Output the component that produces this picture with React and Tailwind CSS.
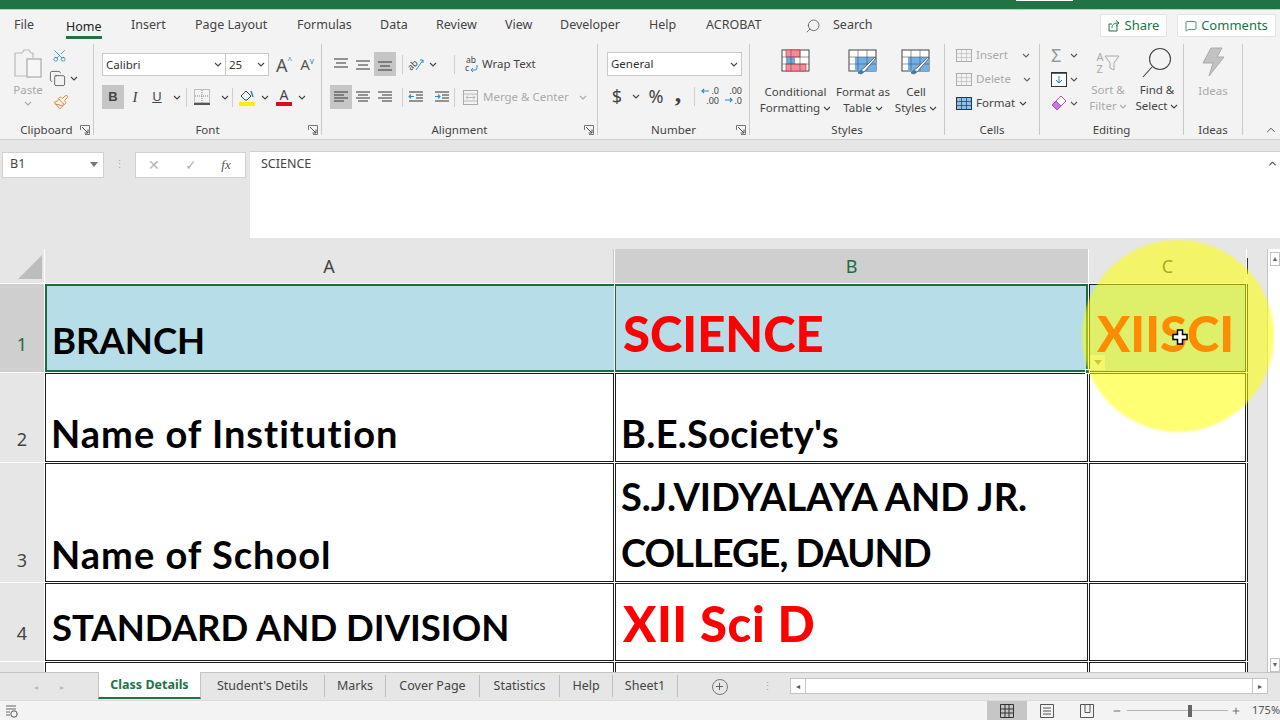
import { Search, MessageSquare, Scissors, Copy, Paintbrush, ChevronUp, Plus, Minus } from 'lucide-react'

function Caret({ className = '' }) {
  return (
    <svg width="8" height="5" viewBox="0 0 8 5" className={`shrink-0 ${className}`}>
      <path d="M1 1l3 3 3-3" fill="none" stroke="currentColor" strokeWidth="1.1" />
    </svg>
  )
}

function Launcher() {
  return (
    <svg width="10" height="10" viewBox="0 0 10 10" className="text-[#777]">
      <path d="M.5 5V.5H9.5V9.5H5" fill="none" stroke="currentColor" />
      <path d="M2 2l6 6M8 4.5V8H4.5" fill="none" stroke="#555" />
    </svg>
  )
}

function Group({ label, width, launcher, children }) {
  return (
    <div className={`relative flex flex-col shrink-0 ${width}`}>
      <div className="h-[82px]">{children}</div>
      <div className="grid grid-cols-[1fr_auto_1fr] items-center text-[11.5px] leading-[16px] text-[#444] pr-[1px]">
        <span />
        <span>{label}</span>
        {launcher ? <span className="justify-self-end pr-[3px] flex"><Launcher /></span> : <span />}
      </div>
      <div className="absolute right-0 top-[4px] bottom-[4px] w-px bg-[#c8c8c8]" />
    </div>
  )
}

function Lines({ rows, arrow }) {
  return (
    <svg width="16" height="14" viewBox="0 0 16 14" className="text-[#444]">
      {rows.map((r, i) => (
        <path key={i} d={`M${r[0]} ${r[2]}H${r[1]}`} stroke="currentColor" strokeWidth="1.1" />
      ))}
      {arrow && <path d={arrow} fill="none" stroke="#2f8fc4" strokeWidth="1.1" />}
    </svg>
  )
}

function Ic({ active, children, w = 'w-[22px]' }) {
  return (
    <div className={`h-[24px] flex items-center justify-center shrink-0 ${w} ${active ? 'bg-[#c6c6c6]' : ''}`}>
      {children}
    </div>
  )
}

function Sep() {
  return <div className="w-px h-[19px] bg-[#cfcfcf] shrink-0" />
}

function ClipboardGroup() {
  return (
    <Group label="Clipboard" width="w-[94px]" launcher>
      <div className="flex pl-[12px] pt-[7px]">
        <div className="w-[32px] flex flex-col items-center text-[#a8a8a8]">
          <svg width="30" height="32" viewBox="0 0 30 32">
            <path d="M2 6h7l2-3h5l2 3h2v5" fill="none" stroke="#bbb" strokeWidth="1.2" />
            <path d="M2 6v23h11" fill="none" stroke="#bbb" strokeWidth="1.2" />
            <rect x="14" y="12" width="14" height="18" fill="#f6f6f6" stroke="#aaa" strokeWidth="1.2" />
          </svg>
          <span className="text-[11.5px] leading-[16px] mt-[3px]">Paste</span>
          <Caret className="mt-[3px]" />
        </div>
        <div className="ml-[5px] flex flex-col items-start gap-[7px] pt-[1px]">
          <Scissors size={15} strokeWidth={1.2} className="text-[#2f7fb4] -rotate-90 ml-[3px]" />
          <div className="flex items-center gap-[4px] text-[#444]">
            <Copy size={17} strokeWidth={1.1} />
            <Caret />
          </div>
          <Paintbrush size={16} strokeWidth={1.4} className="text-[#d8812a] ml-[4px]" />
        </div>
      </div>
    </Group>
  )
}

function FontGroup() {
  return (
    <Group label="Font" width="w-[228px]" launcher>
      <div className="pl-[8px] pt-[13px] flex flex-col gap-[9px]">
        <div className="flex items-center h-[23px]">
          <div className="w-[124px] h-[23px] bg-white border border-[#c9c9c9] flex items-center justify-between pl-[3px] pr-[3px] text-[11.5px] text-[#333]">
            Calibri <Caret className="text-[#444]" />
          </div>
          <div className="w-[43px] h-[23px] bg-white border border-l-0 border-[#c9c9c9] flex items-center justify-between pl-[3px] pr-[3px] text-[11.5px] text-[#333]">
            25 <Caret className="text-[#444]" />
          </div>
          <div className="ml-[4px] w-[22px] text-[18px] leading-none text-[#555] flex items-start justify-center">A<span className="text-[8px] text-[#2f7fb4]">^</span></div>
          <div className="ml-[1px] w-[22px] text-[15px] leading-none text-[#555] flex items-start justify-center">A<span className="text-[8px] text-[#2f7fb4]">v</span></div>
        </div>
        <div className="flex items-center text-[#444] text-[13px]">
          <Ic active><b className="font-['Liberation_Sans']">B</b></Ic>
          <Ic><i className="font-['Liberation_Serif'] text-[15px]">I</i></Ic>
          <Ic><u>U</u></Ic>
          <Ic w="w-[18px]"><Caret /></Ic>
          <Sep />
          <Ic w="w-[30px]">
            <svg width="16" height="16" viewBox="0 0 16 16">
              <rect x=".5" y=".5" width="15" height="13" fill="none" stroke="#888" strokeDasharray="1 1" />
              <path d="M8 1v13M1 7h14" stroke="#888" strokeDasharray="1 1" />
              <path d="M0 15h16" stroke="#222" strokeWidth="1.5" />
            </svg>
          </Ic>
          <Ic w="w-[15px]"><Caret /></Ic>
          <Sep />
          <Ic w="w-[28px]">
            <svg width="18" height="18" viewBox="0 0 18 18">
              <path d="M3 8l5-5 5 5-4 4H7z" fill="none" stroke="#444" />
              <path d="M13 3l2 6" stroke="#2f7fb4" strokeWidth="1.4" />
              <rect x="1" y="14" width="16" height="4" fill="#ffee00" />
            </svg>
          </Ic>
          <Ic w="w-[8px]"><Caret /></Ic>
          <Ic w="w-[30px]">
            <div className="flex flex-col items-center leading-none">
              <span className="text-[14px] leading-[13px]">A</span>
              <span className="w-[16px] h-[4px] bg-[#e00b1c] mt-[1px]" />
            </div>
          </Ic>
          <Ic w="w-[6px]"><Caret /></Ic>
        </div>
      </div>
    </Group>
  )
}

function AlignmentGroup() {
  const top = [[[1, 15, 2], [3, 13, 6], [1, 15, 10]], [[1, 15, 4], [3, 13, 8], [1, 15, 12]], [[1, 15, 5], [3, 13, 9], [1, 15, 13]]]
  const left = [[1, 15, 2], [1, 11, 5], [1, 15, 8], [1, 11, 11]]
  const center = [[1, 15, 2], [3, 13, 5], [1, 15, 8], [3, 13, 11]]
  const right = [[1, 15, 2], [5, 15, 5], [1, 15, 8], [5, 15, 11]]
  const indent = [[1, 15, 2], [8, 15, 5], [8, 15, 8], [1, 15, 11]]
  return (
    <Group label="Alignment" width="w-[276px]" launcher>
      <div className="pl-[8px] pt-[12px] flex flex-col gap-[9px]">
        <div className="flex items-center">
          <Ic><Lines rows={top[0]} /></Ic>
          <Ic><Lines rows={top[1]} /></Ic>
          <Ic active><Lines rows={top[2]} /></Ic>
          <div className="w-[6px]" />
          <Sep />
          <Ic w="w-[26px]">
            <svg width="18" height="16" viewBox="0 0 18 16" className="overflow-visible">
              <text x="1" y="12" fontSize="9" fill="#444" transform="rotate(-45 6 10)">ab</text>
              <path d="M9 14L16 4M13 4h3v3" fill="none" stroke="#2f8fc4" />
            </svg>
          </Ic>
          <Ic w="w-[8px]"><Caret className="text-[#444]" /></Ic>
          <div className="w-[17px]" />
          <Sep />
          <div className="flex items-center ml-[10px] text-[11.5px] text-[#444]">
            <svg width="15" height="17" viewBox="0 0 15 17" className="shrink-0 overflow-visible">
              <text x="1" y="7" fontSize="8.500" fill="#444">ab</text>
              <text x="0" y="15" fontSize="8.500" fill="#444">c</text>
              <path d="M12 9v3a2 2 0 0 1-2 2H6M8 12l-2 2 2 2" fill="none" stroke="#2f8fc4" />
            </svg>
            <span className="ml-[2px]">Wrap Text</span>
          </div>
        </div>
        <div className="flex items-center">
          <Ic active><Lines rows={left} /></Ic>
          <Ic><Lines rows={center} /></Ic>
          <Ic><Lines rows={right} /></Ic>
          <div className="w-[6px]" />
          <Sep />
          <Ic w="w-[26px]"><Lines rows={indent} arrow="M6 6.500H1M3 4.500l-2 2 2 2" /></Ic>
          <Ic w="w-[25px]"><Lines rows={indent} arrow="M1 6.500h5M4 4.500l2 2-2 2" /></Ic>
          <Sep />
          <div className="flex items-center ml-[8px] text-[11.5px] text-[#aaa]">
            <svg width="15" height="15" viewBox="0 0 15 15" className="mr-[5px] shrink-0">
              <rect x=".5" y=".5" width="14" height="14" fill="none" stroke="#aaa" />
              <path d="M.5 4h14M.5 11h14M3 7.500h9M5 5.500l-2 2 2 2M10 5.500l2 2-2 2" fill="none" stroke="#aaa" strokeWidth=".8" />
            </svg>
            <span>Merge &amp; Center</span>
            <Caret className="ml-[10px]" />
          </div>
        </div>
      </div>
    </Group>
  )
}

function DecimalIcon({ className, top, bottom, arrow }) {
  return (
    <svg width="18" height="20" viewBox="0 0 18 20" className={`shrink-0 overflow-visible ${className}`}>
      <text x="18" y="8" fontSize="9" fill="#444" textAnchor="end">{top}</text>
      <text x="18" y="18" fontSize="9" fill="#444" textAnchor="end">{bottom}</text>
      <path d={arrow} fill="none" stroke="#2f8fc4" strokeWidth="1.2" />
    </svg>
  )
}

function NumberGroup() {
  return (
    <Group label="Number" width="w-[152px]" launcher>
      <div className="pl-[9px] pt-[12px] flex flex-col gap-[9px]">
        <div className="w-[135px] h-[24px] bg-white border border-[#c9c9c9] flex items-center justify-between px-[3px] text-[11.5px] text-[#333]">
          General <Caret className="text-[#444]" />
        </div>
        <div className="flex items-center text-[#444]">
          <span className="w-[20px] text-center text-[18px] leading-none">$</span>
          <span className="w-[18px] flex justify-center"><Caret /></span>
          <span className="w-[22px] text-center text-[18px] leading-none">%</span>
          <span className="w-[22px] text-center text-[26px] leading-[18px] font-bold font-['Liberation_Serif'] h-[22px]">,</span>
          <div className="w-[5px]" />
          <Sep />
          <DecimalIcon className="ml-[6px]" top=".0" bottom=".00" arrow="M8 5H1M3 3L1 5l2 2" />
          <DecimalIcon className="ml-[5px]" top=".00" bottom=".0" arrow="M1 14h7M6 12l2 2-2 2" />
        </div>
      </div>
    </Group>
  )
}

function TableIcon({ kind }) {
  return (
    <svg width="30" height="26" viewBox="0 0 30 26">
      <rect x="1" y="1" width="27" height="21" fill="#fff" stroke="#444" />
      {kind === 'cond' ? (
        <>
          <rect x="5" y="1" width="14" height="7" fill="#f48a9a" stroke="#d22" strokeWidth=".6" />
          <rect x="5" y="8" width="9" height="7" fill="#6fa8dc" />
          <rect x="5" y="15" width="20" height="7" fill="#f48a9a" stroke="#d22" strokeWidth=".6" />
        </>
      ) : (
        <rect x="7" y="8" width="21" height="14" fill="#6fb0e8" />
      )}
      <path d="M1 8h27M1 15h27M10 1v21M19 1v21" stroke="#555" strokeWidth=".6" fill="none" />
      {kind !== 'cond' && <path d="M28 9L16 23l-3 2-3-1 3-3 3-2L27 8z" fill="#fff" stroke="#555" strokeWidth=".8" />}
      {kind !== 'cond' && <path d="M10 24l3-3 3 1-2 3z" fill="#2f7fb4" />}
    </svg>
  )
}

function StyleBtn({ w, kind, a, b }) {
  return (
    <div className={`${w} flex flex-col items-center text-[11.5px] leading-[16px] text-[#444] shrink-0`}>
      <div className="h-[26px] mb-[9px]"><TableIcon kind={kind} /></div>
      <span className="whitespace-nowrap">{a}</span>
      <span className="flex items-center gap-[3px] whitespace-nowrap">{b}<Caret /></span>
    </div>
  )
}

function StylesGroup() {
  return (
    <Group label="Styles" width="w-[195px]">
      <div className="flex pt-[9px] pl-[2px]">
        <StyleBtn w="w-[87px]" kind="cond" a="Conditional" b="Formatting" />
        <StyleBtn w="w-[48px]" kind="table" a="Format as" b="Table" />
        <StyleBtn w="w-[58px]" kind="table" a="Cell" b="Styles" />
      </div>
    </Group>
  )
}

function CellRow({ label, off, w = 'ml-[8px]' }) {
  return (
    <div className={`h-[24px] flex items-center pl-[11px] text-[11.5px] ${off ? 'text-[#aaa]' : 'text-[#444]'}`}>
      <svg width="16" height="15" viewBox="0 0 16 15" className="shrink-0">
        <rect x=".5" y="1.5" width="15" height="12" fill={off ? 'none' : '#8cc0ee'} stroke={off ? '#aaa' : '#333'} />
        <path d="M.5 5.5h15M.5 9.5h15M5.5 1.5v12M10.5 1.5v12" stroke={off ? '#bbb' : '#333'} strokeWidth=".7" />
      </svg>
      <span className="ml-[4px]">{label}</span>
      <Caret className={`${w} ${off ? 'text-[#666]' : ''}`} />
    </div>
  )
}

function CellsGroup() {
  return (
    <Group label="Cells" width="w-[95px]">
      <div className="pt-[3px]">
        <CellRow label="Insert" off w="ml-[14px]" />
        <CellRow label="Delete" off w="ml-[12px]" />
        <CellRow label="Format" w="ml-[4px]" />
      </div>
    </Group>
  )
}

function EditingGroup() {
  return (
    <Group label="Editing" width="w-[144px]">
      <div className="flex pl-[11px] pt-[3px]">
        <div className="w-[30px] shrink-0 flex flex-col text-[#555]">
          <div className="h-[24px] flex items-center gap-[5px]">
            <span className="w-[14px] text-[18px] leading-none text-[#999]">Σ</span><Caret />
          </div>
          <div className="h-[24px] flex items-center gap-[3px]">
            <svg width="16" height="15" viewBox="0 0 16 15" className="shrink-0">
              <rect x=".5" y=".5" width="15" height="14" fill="#fff" stroke="#333" />
              <path d="M0 1h16" stroke="#333" strokeWidth="1.5" />
              <path d="M8 4v7M5 8l3 3 3-3" fill="none" stroke="#2f7fb4" />
            </svg>
            <Caret />
          </div>
          <div className="h-[24px] flex items-center gap-[3px]">
            <svg width="16" height="16" viewBox="0 0 16 16" className="shrink-0">
              <path d="M1 10l9-9 5 5-9 9z" fill="#fff" stroke="#b14fc5" />
              <path d="M1 10l4-4 5 5-4 4z" fill="#c77bd6" stroke="#b14fc5" />
            </svg>
            <Caret />
          </div>
        </div>
        <div className="w-[48px] ml-[3px] shrink-0 flex flex-col items-center text-[11.5px] leading-[16px] text-[#aaa]">
          <div className="h-[32px] mt-[4px] mb-[3px] flex items-center text-[11px] leading-[12px]">
            <span>A<br />Z</span>
            <svg width="16" height="18" viewBox="0 0 16 18"><path d="M1 2h14L10 9v7l-4-2V9z" fill="none" stroke="#aaa" /></svg>
          </div>
          <span>Sort &amp;</span>
          <span className="flex items-center gap-[2px]">Filter <Caret /></span>
        </div>
        <div className="w-[50px] shrink-0 flex flex-col items-center text-[11.5px] leading-[16px] text-[#444]">
          <div className="h-[32px] mt-[4px] mb-[3px] flex items-center">
            <svg width="32" height="32" viewBox="0 0 32 32"><circle cx="19" cy="12" r="10.5" fill="none" stroke="#444" strokeWidth="1.1" /><path d="M11 20L2 30" stroke="#444" strokeWidth="1.1" /></svg>
          </div>
          <span>Find &amp;</span>
          <span className="flex items-center gap-[3px]">Select <Caret /></span>
        </div>
      </div>
    </Group>
  )
}

function IdeasGroup() {
  return (
    <Group label="Ideas" width="w-[59px]">
      <div className="flex flex-col items-center pt-[7px] text-[11.5px] leading-[16px] text-[#aaa] pr-[1px]">
        <svg width="24" height="30" viewBox="0 0 24 30" className="mb-[6px]">
          <path d="M10 1h11l-5 9h7L8 29l4-13H2z" fill="#c2c2c2" stroke="#aaa" />
        </svg>
        Ideas
      </div>
    </Group>
  )
}

function TopTabs() {
  const tabs = [
    ['File', 'w-[52px]'], ['Home', 'w-[65px]'], ['Insert', 'w-[64px]'], ['Page Layout', 'w-[102px]'],
    ['Formulas', 'w-[83px]'], ['Data', 'w-[56px]'], ['Review', 'w-[69px]'], ['View', 'w-[55px]'],
    ['Developer', 'w-[89px]'], ['Help', 'w-[57px]'], ['ACROBAT', 'w-[98px]'],
  ]
  return (
    <div className="h-[30px] flex items-center pl-[14px] pt-[1px] text-[12.5px] text-[#444] bg-[#f3f3f3]">
      {tabs.map(([t, w]) => (
        <div key={t} className={`${w} shrink-0`}>
          <span className={t === 'Home' ? 'inline-block text-[#222] h-[28px] leading-[31px] border-b-[3px] border-[#217346] mt-[-1px]' : ''}>{t}</span>
        </div>
      ))}
      <Search size={16} strokeWidth={1.2} className="-scale-x-100 text-[#555] shrink-0 ml-[1px]" />
      <span className="ml-[12px]">Search</span>
      <div className="ml-auto flex items-center gap-[10px] pr-[4px] text-[#217346] text-[13px]">
        <div className="w-[67px] h-[23px] bg-white border border-[#e4e4e4] flex items-center justify-center gap-[4px]">
          <svg width="13" height="13" viewBox="0 0 13 13" className="shrink-0">
            <path d="M9 5.500V12H1V5h3" fill="none" stroke="currentColor" />
            <path d="M4 9c0-4 3-5 6-5M8 1.500L11 4 8 6.500" fill="none" stroke="currentColor" />
          </svg>
          Share
        </div>
        <div className="w-[99px] h-[23px] bg-white border border-[#e4e4e4] flex items-center justify-center gap-[4px]">
          <MessageSquare size={12} strokeWidth={1.5} />Comments
        </div>
      </div>
    </div>
  )
}

function FormulaBar() {
  return (
    <div className="h-[109px] bg-[#e6e6e6] pt-[11px] flex items-start">
      <div className="flex items-center h-[27px] pl-[2px] shrink-0 w-[250px]">
        <div className="w-[102px] h-[26px] bg-white border border-[#d0d0d0] flex items-center justify-between pl-[7px] pr-[5px] text-[12.5px] text-[#444]">
          B1
          <svg width="8" height="5" viewBox="0 0 8 5"><path d="M0 0h8L4 5z" fill="#777" /></svg>
        </div>
        <span className="w-[31px] text-center text-[#aaa] text-[11px]">⋮</span>
        <div className="w-[111px] h-[26px] bg-white border border-[#d0d0d0] flex items-center justify-around text-[#b5b5b5] pr-[2px]">
          <span className="text-[14px]">✕</span>
          <span className="text-[14px]">✓</span>
          <i className="font-['Liberation_Serif'] text-[13px] text-[#555]">fx</i>
        </div>
      </div>
      <div className="flex-1 h-[87px] bg-white border-t border-[#cfcfcf] flex justify-between pl-[11px] pr-[2px] pt-[3px] text-[12.5px] text-[#444]">
        <span>SCIENCE</span>
        <ChevronUp size={11} strokeWidth={2.5} className="mt-[3px] text-[#555]" />
      </div>
    </div>
  )
}

function Cell({ className = '', children }) {
  return <div className={`border border-[#1d1d1d] flex items-end overflow-hidden whitespace-nowrap ${className}`}>{children}</div>
}

function RowHead({ n, className }) {
  return <div className={`flex items-end justify-center text-[18px] leading-none ${className}`}>{n}</div>
}

function Sheet() {
  const caps = "font-['Lato'] font-bold text-[36.5px] leading-[46px] text-black"
  const words = "font-['Lato'] font-bold text-[38px] leading-[46px] tracking-[1px] text-black"
  const red = "font-['Lato'] font-black text-[49px] leading-[56px] text-[#ff0000]"
  const edge = <div className="border-l-2 border-[#1d1d1d]" />
  return (
    <div className="flex h-[423px] bg-[#e6e6e6]">
      <div className="w-[1248px] shrink-0 grid grid-cols-[44px_569px_473px_157px_2px] grid-rows-[34px_88px_89px_119px_78px_1fr] gap-px overflow-hidden bg-white">
        <div className="bg-[#e6e6e6] flex items-end justify-end pr-[2px] pb-[4px]">
          <svg width="24" height="24" viewBox="0 0 24 24"><path d="M24 0v24H0z" fill="#bdbdbd" /></svg>
        </div>
        <div className="bg-[#e6e6e6] border-r border-[#c4c4c4] flex items-center justify-center text-[18px] text-[#444]">A</div>
        <div className="bg-[#cfcfcf] flex items-center justify-center text-[18px] text-[#1f6b40]">B</div>
        <div className="bg-[#e6e6e6] flex items-center justify-center text-[18px] text-[#444]">C</div>
        <div className="bg-[#e6e6e6] pt-[9px]"><div className="w-[2px] h-[16px] bg-[#333]" /></div>

        <RowHead n="1" className="bg-[#cfcfcf] pb-[19px] text-[#1f6b40]" />
        <Cell className="bg-[#b7dde8] border-t-2 border-b-2 border-l-2 border-r-0 border-[#1f6b40] pl-[5px] pb-[7px]"><span className={caps}>BRANCH</span></Cell>
        <Cell className="bg-[#b7dde8] border-t-2 border-b-2 border-r-2 border-[#1f6b40] pl-[7px] pb-[9px]"><span className={red}>SCIENCE</span></Cell>
        <Cell className="bg-[#b7dde8] pl-[7px] pb-[10px]"><span className={red}>XIISCI</span></Cell>
        {edge}

        <RowHead n="2" className="bg-[#e6e6e6] pb-[14px] text-[#444]" />
        <Cell className="bg-white pl-[5px] pb-[5px]"><span className={words}>Name of Institution</span></Cell>
        <Cell className="bg-white pl-[5px] pb-[5px]"><span className="font-['Lato'] font-bold text-[38px] leading-[46px] tracking-[0.3px] text-black">B.E.Society's</span></Cell>
        <Cell className="bg-white" />
        {edge}

        <RowHead n="3" className="bg-[#e6e6e6] pb-[13px] text-[#444]" />
        <Cell className="bg-white pl-[5px] pb-[4px]"><span className={words}>Name of School</span></Cell>
        <Cell className="bg-white pl-[5px] pb-[1px]">
          <div className="font-['Lato'] font-bold text-[38px] leading-[56px] text-black">
            <div>S.J.VIDYALAYA AND JR.</div>
            <div className="tracking-[-1px]">COLLEGE, DAUND</div>
          </div>
        </Cell>
        <Cell className="bg-white" />
        {edge}

        <RowHead n="4" className="bg-[#e6e6e6] pb-[19px] text-[#444]" />
        <Cell className="bg-white pl-[6px] pb-[10px]"><span className={caps}>STANDARD AND DIVISION</span></Cell>
        <Cell className="bg-white pl-[7px] pb-[9px]"><span className="font-['Lato'] font-black text-[49px] leading-[56px] tracking-[0.6px] text-[#ff0000]">XII Sci D</span></Cell>
        <Cell className="bg-white" />
        {edge}

        <div className="bg-[#e6e6e6]" />
        <Cell className="bg-white border-b-0" />
        <Cell className="bg-white border-b-0" />
        <Cell className="bg-white border-b-0" />
        {edge}
      </div>
      <div className="w-[20px] shrink-0 border-r border-[#c4c4c4]" />
      <div className="w-[12px] shrink-0 flex flex-col justify-between pt-[3px] pl-[2px] bg-white">
        <div className="h-[14px] border border-[#c4c4c4] bg-white text-[7px] leading-[12px] text-center text-[#666]">▲</div>
        <div className="h-[14px] border border-[#c4c4c4] bg-white text-[7px] leading-[12px] text-center text-[#666]">▼</div>
      </div>
    </div>
  )
}

function SheetTabs() {
  const tabs = [
    ["Student's Detils", 'w-[124px]'], ['Marks', 'w-[61px]'], ['Cover Page', 'w-[94px]'],
    ['Statistics', 'w-[80px]'], ['Help', 'w-[53px]'], ['Sheet1', 'w-[65px]'],
  ]
  return (
    <div className="h-[28px] bg-[#e6e6e6] border-t border-[#c4c4c4] flex items-start text-[12.5px] text-[#444]">
      <div className="w-[98px] h-[27px] shrink-0 flex items-center justify-center gap-[22px] text-[#bbb] text-[8px]">
        <span>◂</span><span>▸</span>
      </div>
      <div className="w-[103px] h-[27px] -mt-px pt-[2px] shrink-0 bg-white border-x border-[#c4c4c4] border-b-2 border-b-[#217346] flex items-center justify-center font-bold text-[#217346]">
        Class Details
      </div>
      {tabs.map(([t, w]) => (
        <div key={t} className={`${w} h-[22px] mt-[2px] shrink-0 border-r border-[#bdbdbd] flex items-center justify-center`}>{t}</div>
      ))}
      <div className="w-[82px] h-[27px] shrink-0 flex items-center justify-center pl-[1px]">
        <span className="w-[16px] h-[16px] rounded-full border border-[#777] flex items-center justify-center text-[#555]">
          <Plus size={11} strokeWidth={2} />
        </span>
      </div>
      <div className="w-[11px] shrink-0 h-[27px] flex items-center text-[#aaa] text-[11px] ml-[2px]">⋮</div>
      <div className="ml-[17px] w-[478px] h-[16px] mt-[5px] bg-white border border-[#c4c4c4] flex justify-between items-center text-[#555] text-[8px] shrink-0">
        <span className="w-[15px] border-r border-[#c4c4c4] text-center leading-[14px]">◂</span>
        <span className="w-[15px] border-l border-[#c4c4c4] text-center leading-[14px]">▸</span>
      </div>
    </div>
  )
}

function StatusBar() {
  return (
    <div className="h-[20px] bg-[#f3f3f3] border-t border-[#dcdcdc] flex items-center text-[#555]">
      <svg width="14" height="14" viewBox="0 0 14 14" className="ml-[5px]">
        <path d="M1 2h10M1 5h10M1 8h4M1 11h4" stroke="#666" />
        <circle cx="9" cy="10" r="3.2" fill="none" stroke="#555" />
      </svg>
      <div className="ml-auto flex items-center h-full">
        <div className="w-[40px] h-full bg-[#c6c6c6] flex items-center justify-center">
          <svg width="14" height="14" viewBox="0 0 14 14"><path d="M.5.5h13v13H.5zM5 .5v13M9 .5v13M.5 5h13M.5 9h13" fill="none" stroke="#333" /></svg>
        </div>
        <div className="w-[40px] flex justify-center">
          <svg width="14" height="14" viewBox="0 0 14 14"><path d="M.5.5h13v13H.5zM3 4h8M3 7h8M3 10h8" fill="none" stroke="#555" /></svg>
        </div>
        <div className="w-[40px] flex justify-center">
          <svg width="14" height="14" viewBox="0 0 14 14"><path d="M.5.5h13v13H.5zM5 .5v8h5V.5" fill="none" stroke="#555" /></svg>
        </div>
        <Minus size={10} strokeWidth={2} className="ml-[5px]" />
        <div className="w-[101px] h-px bg-[#b5b5b5] mx-[5px] flex items-center">
          <div className="ml-[61px] w-[4px] h-[12px] bg-[#666] shrink-0" />
        </div>
        <Plus size={10} strokeWidth={2} className="-ml-[2px]" />
        <span className="ml-[11px] w-[28px] text-[11px] whitespace-nowrap">175%</span>
      </div>
    </div>
  )
}

export default function App() {
  return (
    <div className="relative w-[1280px] h-[720px] overflow-hidden bg-white font-['Noto_Sans'] flex flex-col">
      <div className="h-[9px] bg-[#217346] flex justify-end pr-[207px]">
        <div className="w-[57px] h-px bg-white" />
      </div>
      <div className="h-px bg-[#a9d8b8]" />
      <TopTabs />
      <div className="h-[99px] flex bg-[#f3f3f3]">
        <ClipboardGroup />
        <FontGroup />
        <AlignmentGroup />
        <NumberGroup />
        <StylesGroup />
        <CellsGroup />
        <EditingGroup />
        <IdeasGroup />
        <div className="flex-1 flex items-end justify-end pr-[2px] pb-[2px]">
          <ChevronUp size={14} strokeWidth={1.5} className="text-[#444]" />
        </div>
      </div>
      <div className="h-px bg-[#cfcfcf]" />
      <FormulaBar />
      <Sheet />
      <SheetTabs />
      <StatusBar />

      {/* spotlight + cursor + selection bits sit over the sheet */}
      <div className="absolute left-[1090px] top-[355px] w-[15px] h-[15px] bg-[#f3f3f3]/70 flex items-center justify-center">
        <svg width="8" height="5" viewBox="0 0 8 5"><path d="M0 0h8L4 5z" fill="#888" /></svg>
      </div>
      <div className="absolute left-[1085px] top-[369px] w-[5px] h-[5px] bg-[#1f6b40] border border-white" />
      <div className="absolute left-[1082px] top-[240px] w-[192px] h-[192px] rounded-full bg-[#ffff00]/55 blur-[1px]" />
      <svg width="16" height="16" viewBox="0 0 16 16" className="absolute left-[1172px] top-[329px]">
        <path d="M5.5 1h5v4.5H15v5h-4.500V15h-5v-4.500H1v-5h4.500z" fill="#fff" stroke="#000" strokeWidth="1.5" />
      </svg>
    </div>
  )
}
